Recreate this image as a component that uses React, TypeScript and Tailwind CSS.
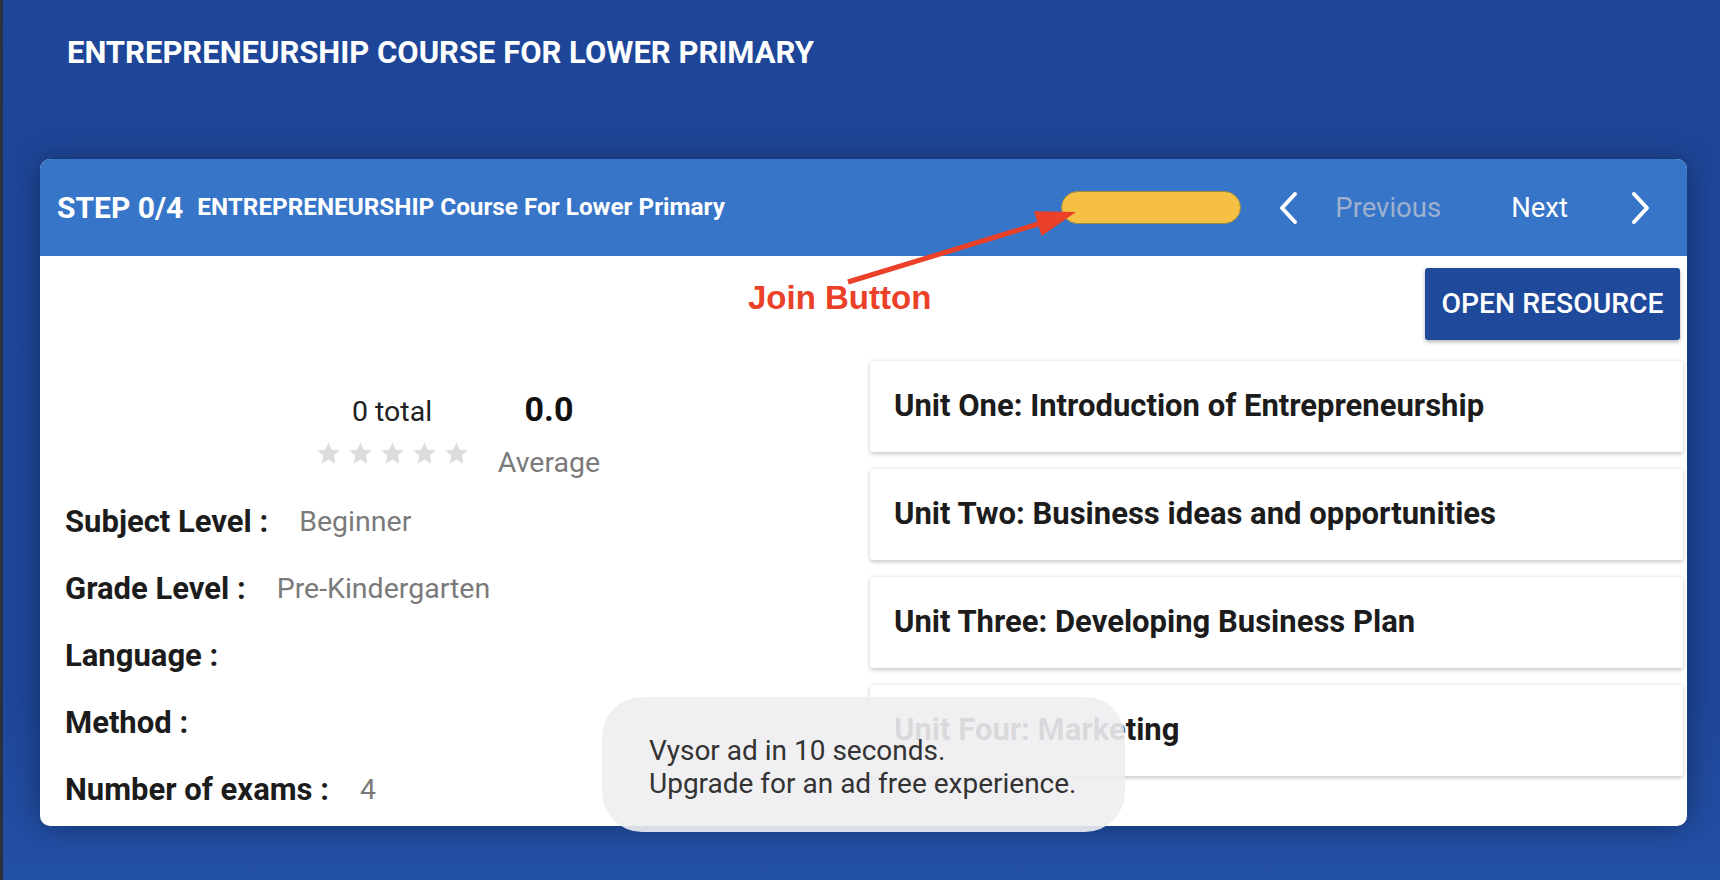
import React from "react";

const units = [
  "Unit One: Introduction of Entrepreneurship",
  "Unit Two: Business ideas and opportunities",
  "Unit Three: Developing Business Plan",
  "Unit Four: Marketing",
];

const details: { label: string; value?: string }[] = [
  { label: "Subject Level :", value: "Beginner" },
  { label: "Grade Level :", value: "Pre-Kindergarten" },
  { label: "Language :" },
  { label: "Method :" },
  { label: "Number of exams :", value: "4" },
];

function Star() {
  return (
    <svg width="27" height="27" viewBox="0 0 24 24">
      <path
        d="M12 17.27L18.18 21l-1.64-7.03L22 9.24l-7.19-.61L12 2 9.19 8.63 2 9.24l5.46 4.73L5.82 21z"
        fill="#dcdcdc"
      />
    </svg>
  );
}

function Chevron({ dir }: { dir: "left" | "right" }) {
  return (
    <svg width="22" height="34" viewBox="0 0 22 34">
      <path
        d={dir === "left" ? "M18 3 L5 17 L18 31" : "M4 3 L17 17 L4 31"}
        fill="none"
        stroke="white"
        strokeWidth="4"
        strokeLinecap="round"
        strokeLinejoin="round"
      />
    </svg>
  );
}

export default function App() {
  return (
    <div className="relative w-[1720px] h-[880px] overflow-hidden bg-[linear-gradient(180deg,#1e4698_0%,#1f4799_80%,#2250a6_100%)] border-l-[3px] border-[#2b303b] font-['Roboto',sans-serif]">
      <div className="pl-[64px] pt-[37px] text-[31px] leading-[31px] font-bold text-white">
        ENTREPRENEURSHIP COURSE FOR LOWER PRIMARY
      </div>

      <div className="ml-[37px] mt-[91px] w-[1647px] h-[667px] rounded-[10px] bg-white overflow-hidden shadow-[0_0_30px_rgba(0,0,0,0.35)] flex flex-col">
        {/* header */}
        <div className="h-[97px] shrink-0 bg-[#3775c9] flex items-center pl-[17px] text-white">
          <span className="text-[30px] font-bold">STEP 0/4</span>
          <span className="ml-[14px] text-[24.3px] font-bold">
            ENTREPRENEURSHIP Course For Lower Primary
          </span>
          <div className="ml-auto w-[180px] h-[33px] rounded-full bg-[#f5c043] border border-[#9c8a3c]" />
          <div className="ml-[36px] flex items-center">
            <Chevron dir="left" />
          </div>
          <span className="ml-[36px] text-[27.5px] text-[#9db1ce]">Previous</span>
          <span className="ml-[70px] text-[27.5px]">Next</span>
          <div className="ml-[62px] mr-[35px] flex items-center">
            <Chevron dir="right" />
          </div>
        </div>

        {/* body */}
        <div className="flex-1 flex flex-col">
          <div className="flex justify-end pt-[12px] pr-[7px]">
            <button className="w-[255px] h-[72px] rounded-[3px] bg-[#1f4a9c] text-white text-[28.3px] font-medium shadow-[0_2px_4px_rgba(0,0,0,0.3)]">
              OPEN RESOURCE
            </button>
          </div>

          <div className="flex mt-[20px]">
            <div className="w-[830px] shrink-0 pl-[25px]">
              <div className="mt-[31px] flex justify-center">
                <div className="grid grid-cols-[164px_112px] gap-x-[19px] items-baseline justify-items-center -ml-[20px]">
                  <span className="text-[28.5px] leading-[36px] text-[#222]">0 total</span>
                  <span className="text-[34px] leading-[36px] font-bold text-[#111]">0.0</span>
                  <div className="self-start mt-[10px] flex gap-[5px]">
                    <Star />
                    <Star />
                    <Star />
                    <Star />
                    <Star />
                  </div>
                  <span className="self-start mt-[17px] text-[28.5px] leading-[32px] text-[#7a7a7a]">
                    Average
                  </span>
                </div>
              </div>

              <div className="mt-[10px] flex flex-col">
                {details.map((d) => (
                  <div key={d.label} className="h-[67px] flex items-center">
                    <span className="text-[31px] font-bold text-[#1c1c1c]">{d.label}</span>
                    {d.value && (
                      <span className="ml-[31px] text-[28.5px] text-[#7a7a7a]">{d.value}</span>
                    )}
                  </div>
                ))}
              </div>
            </div>

            <div className="flex-1 pr-[4px] flex flex-col gap-[16px]">
              {units.map((u) => (
                <div
                  key={u}
                  className="h-[92px] shrink-0 flex items-center px-[24px] bg-white border-t border-[#eeeeee] shadow-[0_2px_4px_rgba(0,0,0,0.22)] rounded-[3px]"
                >
                  <span className="text-[31px] font-bold text-[#1c1c1c]">{u}</span>
                </div>
              ))}
            </div>
          </div>
        </div>
      </div>

      {/* vysor toast */}
      <div className="absolute left-[599px] top-[697px] w-[523px] h-[135px] rounded-[40px] bg-[#eeeef1]/90 pl-[47px] pt-[37px] text-[28px] leading-[33px] text-[#333]">
        <div>Vysor ad in 10 seconds.</div>
        <div>Upgrade for an ad free experience.</div>
      </div>

      {/* annotation */}
      <div className="absolute left-[745px] top-[281px] text-[33px] leading-[33px] font-bold text-[#ea4128] font-['Liberation_Sans',sans-serif]">
        Join Button
      </div>
      <svg className="absolute left-0 top-0 pointer-events-none" width="1720" height="880">
        <line x1="845" y1="282" x2="1045" y2="221" stroke="#ea4128" strokeWidth="5" />
        <polygon points="1073,212 1038.6,236.1 1031,211.3" fill="#ea4128" />
      </svg>
    </div>
  );
}
